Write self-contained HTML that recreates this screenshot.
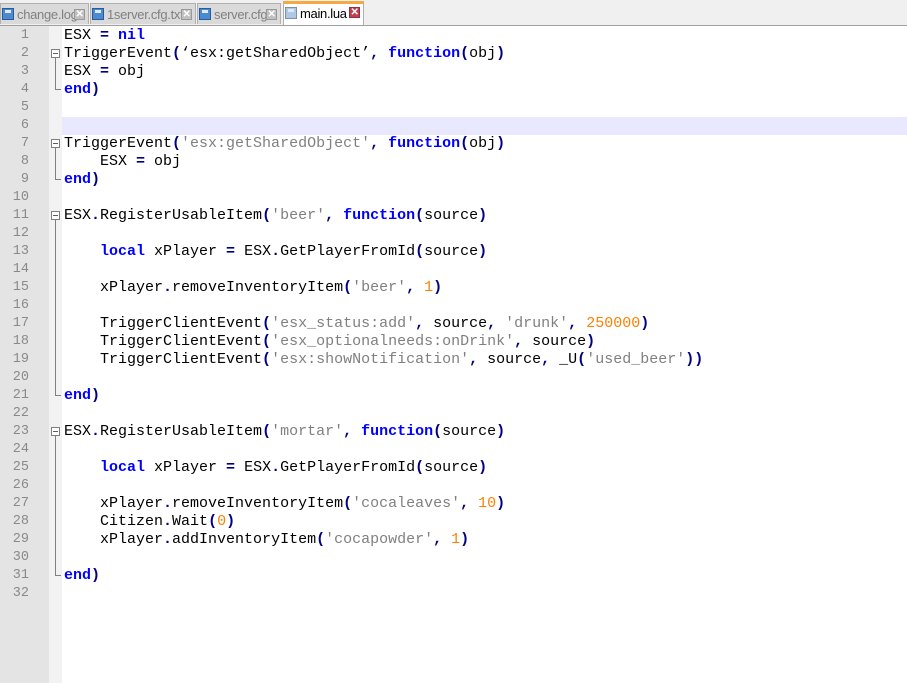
<!DOCTYPE html><html><head><style>
body{margin:0;width:907px;height:683px;overflow:hidden;background:#fff;font-family:"Liberation Sans",sans-serif;position:relative}
#tabs{position:absolute;left:0;top:0;width:907px;height:25px;background:#f0f0f0;border-bottom:1px solid #a0a0a0}
.tab{position:absolute;top:3px;height:21px;background:#dadada;border:1px solid #b0b0b0;border-bottom:none;font-size:13px;color:#808080;line-height:21px;box-sizing:border-box;letter-spacing:-0.3px}
.tab .ic{position:absolute;left:1px;top:4px;width:12px;height:12px;background:#4a8bd0;border:1px solid #2a5a9a;box-sizing:border-box}
.tab .ic::after{content:"";position:absolute;left:2px;top:1px;width:6px;height:3px;background:#dfe8f5}
.tab .t{position:absolute;left:16px}
.tab .x{position:absolute;right:3px;top:5px;width:11px;height:11px;background:#c0c0c0;border:1px solid #999;box-sizing:border-box;color:#fff;font-size:10px;line-height:9px;text-align:center;font-weight:bold}
.tab.act{background:#fff;color:#000;top:1px;height:24px;border-top:3px solid #f6a940;line-height:19px}
.tab.act .ic{top:3px;background:#b0c8e8;border-color:#8090a0}
.tab.act .x{background:#c04050;border-color:#903040;top:3px}
#gut{position:absolute;left:0;top:26px;width:49px;height:657px;background:#e4e4e4}
#fold{position:absolute;left:49px;top:26px;width:13px;height:657px;background:#f2f2f2}
#hl{position:absolute;left:62px;top:117px;width:845px;height:18px;background:#e8e8ff}
.ln{position:absolute;right:878px;font-family:"Liberation Mono",monospace;font-size:13.5px;color:#8a8a8a;line-height:18px}
pre{position:absolute;left:64px;top:27px;margin:0;font-family:"Liberation Mono",monospace;font-size:15px;line-height:18px;color:#000}
.k{color:#0000ff;font-weight:bold}.p{color:#000080;font-weight:bold}.s{color:#808080}.n{color:#ff8000}
.fb{position:absolute;left:51px;width:9px;height:9px;border:1px solid #808080;background:#fff;box-sizing:border-box}
.fb::after{content:"";position:absolute;left:1px;top:3px;width:5px;height:1px;background:#606060}
.fl{position:absolute;left:55px;width:1px;background:#808080}
.fc{position:absolute;left:55px;width:6px;height:1px;background:#808080}
</style></head><body>
<div id="tabs">
<div class="tab" style="left:0;width:89px"><span class="ic"></span><span class="t">change.log</span><span class="x">✕</span></div>
<div class="tab" style="left:90px;width:106px"><span class="ic"></span><span class="t">1server.cfg.txt</span><span class="x">✕</span></div>
<div class="tab" style="left:197px;width:84px"><span class="ic"></span><span class="t">server.cfg</span><span class="x">✕</span></div>
<div class="tab act" style="left:283px;width:81px"><span class="ic"></span><span class="t">main.lua</span><span class="x">✕</span></div>
</div>
<div id="gut"></div><div id="fold"></div><div id="hl"></div>
<div class="fb" style="top:49px"></div><div class="fl" style="top:58px;height:32px"></div><div class="fc" style="top:89px"></div>
<div class="fb" style="top:139px"></div><div class="fl" style="top:148px;height:32px"></div><div class="fc" style="top:179px"></div>
<div class="fb" style="top:211px"></div><div class="fl" style="top:220px;height:176px"></div><div class="fc" style="top:395px"></div>
<div class="fb" style="top:427px"></div><div class="fl" style="top:436px;height:140px"></div><div class="fc" style="top:575px"></div>
<div class="ln" style="top:27px">1</div><div class="ln" style="top:45px">2</div><div class="ln" style="top:63px">3</div><div class="ln" style="top:81px">4</div><div class="ln" style="top:99px">5</div><div class="ln" style="top:117px">6</div><div class="ln" style="top:135px">7</div><div class="ln" style="top:153px">8</div><div class="ln" style="top:171px">9</div><div class="ln" style="top:189px">10</div><div class="ln" style="top:207px">11</div><div class="ln" style="top:225px">12</div><div class="ln" style="top:243px">13</div><div class="ln" style="top:261px">14</div><div class="ln" style="top:279px">15</div><div class="ln" style="top:297px">16</div><div class="ln" style="top:315px">17</div><div class="ln" style="top:333px">18</div><div class="ln" style="top:351px">19</div><div class="ln" style="top:369px">20</div><div class="ln" style="top:387px">21</div><div class="ln" style="top:405px">22</div><div class="ln" style="top:423px">23</div><div class="ln" style="top:441px">24</div><div class="ln" style="top:459px">25</div><div class="ln" style="top:477px">26</div><div class="ln" style="top:495px">27</div><div class="ln" style="top:513px">28</div><div class="ln" style="top:531px">29</div><div class="ln" style="top:549px">30</div><div class="ln" style="top:567px">31</div><div class="ln" style="top:585px">32</div>
<pre>ESX <span class="p">=</span> <span class="k">nil</span>
TriggerEvent<span class="p">(</span>‘esx:getSharedObject’<span class="p">,</span> <span class="k">function</span><span class="p">(</span>obj<span class="p">)</span>
ESX <span class="p">=</span> obj
<span class="k">end</span><span class="p">)</span>


TriggerEvent<span class="p">(</span><span class="s">'esx:getSharedObject'</span><span class="p">,</span> <span class="k">function</span><span class="p">(</span>obj<span class="p">)</span>
    ESX <span class="p">=</span> obj
<span class="k">end</span><span class="p">)</span>

ESX<span class="p">.</span>RegisterUsableItem<span class="p">(</span><span class="s">'beer'</span><span class="p">,</span> <span class="k">function</span><span class="p">(</span>source<span class="p">)</span>

    <span class="k">local</span> xPlayer <span class="p">=</span> ESX<span class="p">.</span>GetPlayerFromId<span class="p">(</span>source<span class="p">)</span>

    xPlayer<span class="p">.</span>removeInventoryItem<span class="p">(</span><span class="s">'beer'</span><span class="p">,</span> <span class="n">1</span><span class="p">)</span>

    TriggerClientEvent<span class="p">(</span><span class="s">'esx_status:add'</span><span class="p">,</span> source<span class="p">,</span> <span class="s">'drunk'</span><span class="p">,</span> <span class="n">250000</span><span class="p">)</span>
    TriggerClientEvent<span class="p">(</span><span class="s">'esx_optionalneeds:onDrink'</span><span class="p">,</span> source<span class="p">)</span>
    TriggerClientEvent<span class="p">(</span><span class="s">'esx:showNotification'</span><span class="p">,</span> source<span class="p">,</span> _U<span class="p">(</span><span class="s">'used_beer'</span><span class="p">))</span>

<span class="k">end</span><span class="p">)</span>

ESX<span class="p">.</span>RegisterUsableItem<span class="p">(</span><span class="s">'mortar'</span><span class="p">,</span> <span class="k">function</span><span class="p">(</span>source<span class="p">)</span>

    <span class="k">local</span> xPlayer <span class="p">=</span> ESX<span class="p">.</span>GetPlayerFromId<span class="p">(</span>source<span class="p">)</span>

    xPlayer<span class="p">.</span>removeInventoryItem<span class="p">(</span><span class="s">'cocaleaves'</span><span class="p">,</span> <span class="n">10</span><span class="p">)</span>
    Citizen<span class="p">.</span>Wait<span class="p">(</span><span class="n">0</span><span class="p">)</span>
    xPlayer<span class="p">.</span>addInventoryItem<span class="p">(</span><span class="s">'cocapowder'</span><span class="p">,</span> <span class="n">1</span><span class="p">)</span>

<span class="k">end</span><span class="p">)</span>
</pre>
</body></html>
